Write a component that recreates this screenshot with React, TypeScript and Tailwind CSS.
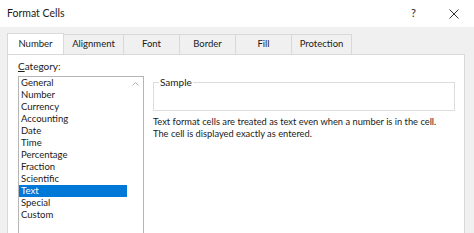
const TABS = ["Number", "Alignment", "Font", "Border", "Fill", "Protection"];
const TAB_WIDTHS = ["w-[57px]", "w-[60px]", "w-[56px]", "w-[56px]", "w-[56px]", "w-[60px]"];

const CATEGORIES = [
  "General",
  "Number",
  "Currency",
  "Accounting",
  "Date",
  "Time",
  "Percentage",
  "Fraction",
  "Scientific",
  "Text",
  "Special",
  "Custom",
];

export default function App() {
  return (
    <div className="w-[474px] h-[233px] overflow-hidden bg-white text-[#1a1a1a] font-['Lato',sans-serif]">
      {/* Title bar */}
      <div className="h-[27px] flex items-center pl-[7px] pr-[15px]">
        <span className="text-[10.5px]">Format Cells</span>
        <span className="ml-auto text-[11px] mr-[33px]">?</span>
        <svg width="10" height="10" viewBox="0 0 10 10" className="text-[#333]">
          <path d="M0.5 0.5 L9.5 9.5 M9.5 0.5 L0.5 9.5" stroke="currentColor" strokeWidth="1" />
        </svg>
      </div>

      {/* Body */}
      <div className="bg-[#f0f0f0] h-[206px] pl-[7px] pr-[9px] pt-[7px]">
        <div className="flex h-[20px]">
          {TABS.map((t, i) => (
            <div
              key={t}
              className={`${TAB_WIDTHS[i]} flex items-center justify-center text-[9.5px] border-t border-r border-[#d9d9d9] ${
                i === 0 ? "bg-white border-l -mt-[1px] h-[21px] relative z-10" : "bg-[#f0f0f0]"
              }`}
            >
              {t}
            </div>
          ))}
        </div>
        <div className="bg-white border border-[#d9d9d9] h-[200px] flex pl-[10px] pr-[8px] pt-[5px] gap-[9px]">
          {/* Category */}
          <div className="w-[126px] flex flex-col">
            <div className="text-[10px] leading-[13px] mb-[3px]">
              <span className="underline">C</span>ategory:
            </div>
            <div className="flex-1 border border-[#b5b5b5] flex">
              <div className="flex-1">
                {CATEGORIES.map((c) => (
                  <div
                    key={c}
                    className={`h-[12px] leading-[12px] text-[9.5px] pl-[2px] ${
                      c === "Text" ? "bg-[#0078d7] text-white" : ""
                    }`}
                  >
                    {c}
                  </div>
                ))}
              </div>
              <div className="w-[16px] flex justify-center pt-[5px]">
                <svg width="7" height="4" viewBox="0 0 7 4">
                  <path d="M0.5 3.5 L3.5 0.5 L6.5 3.5" fill="none" stroke="#b0b0b0" strokeWidth="1" />
                </svg>
              </div>
            </div>
          </div>

          {/* Right side */}
          <div className="flex-1 pt-[22px]">
            <div className="relative border border-[#dcdcdc] h-[29px] mr-[1px]">
              <span className="absolute -top-[7px] left-[5px] bg-white px-[1px] text-[10px] leading-[12px]">
                Sample
              </span>
            </div>
            <p className="text-[9.3px] leading-[12px] mt-[5px]">
              Text format cells are treated as text even when a number is in the cell.
              <br />
              The cell is displayed exactly as entered.
            </p>
          </div>
        </div>
      </div>
    </div>
  );
}
